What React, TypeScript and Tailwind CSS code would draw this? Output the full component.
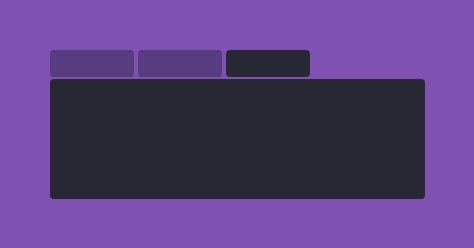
export default function App() {
  const tabs = [false, false, true];
  return (
    <div className="w-[474px] h-[248px] bg-[#7f51b2] flex items-center justify-center">
      <div className="w-[375px] flex flex-col gap-[2px]">
        <div className="flex gap-[4px]">
          {tabs.map((active, i) => (
            <div
              key={i}
              className={
                active
                  ? "w-[84px] h-[27px] rounded bg-[#272833]"
                  : "w-[84px] h-[27px] rounded bg-[#573d80]"
              }
            />
          ))}
        </div>
        <div className="h-[120px] rounded bg-[#272833]" />
      </div>
    </div>
  );
}
